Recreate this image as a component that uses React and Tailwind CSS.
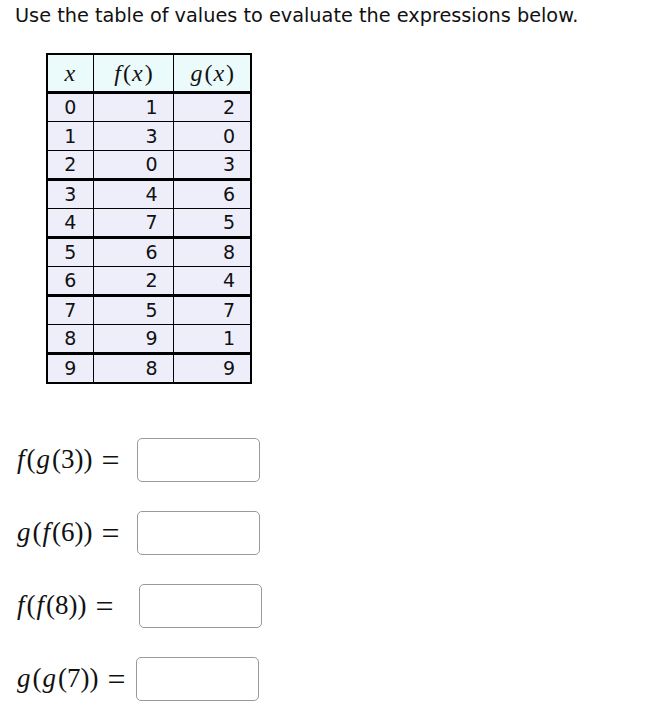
import React from 'react';

const rows = [
  [0, 1, 2],
  [1, 3, 0],
  [2, 0, 3],
  [3, 4, 6],
  [4, 7, 5],
  [5, 6, 8],
  [6, 2, 4],
  [7, 5, 7],
  [8, 9, 1],
  [9, 8, 9],
];

const questions = [
  { outer: 'f', inner: 'g', n: 3, box: 'ml-[15px]' },
  { outer: 'g', inner: 'f', n: 6, box: 'ml-[15px]' },
  { outer: 'f', inner: 'f', n: 8, box: 'ml-[17px]' },
  { outer: 'g', inner: 'g', n: 7, box: 'ml-[14px]' },
];

const serif = "font-['Liberation_Serif','DejaVu_Serif',serif]";

// italic letter with a bit of room so it doesn't crash into the parens
const Var = ({ children }) => <i className="italic pl-[1px] pr-[2px]">{children}</i>;

const App = () => {
  return (
    <div className="w-[646px] h-[724px] bg-white text-[#111] font-['DejaVu_Sans',sans-serif]">
      <p className="pl-[15px] pt-[3px] text-[19.3px] leading-[26px]">
        Use the table of values to evaluate the expressions below.
      </p>

      {/* table of values */}
      <table className="ml-[46px] mt-[24px] border-collapse border-2 border-black text-[19px]">
        <thead>
          <tr className={`bg-[#ebfafa] h-[35px] border-b-[3px] border-black ${serif} text-[24px]`}>
            <th className="w-[46px] border-r border-black font-normal"><Var>x</Var></th>
            <th className="w-[80px] border-r border-black font-normal">
              <Var>f</Var>(<Var>x</Var>)
            </th>
            <th className="w-[78px] font-normal">
              <Var>g</Var>(<Var>x</Var>)
            </th>
          </tr>
        </thead>
        <tbody>
          {rows.map(([x, f, g], i) => (
            <tr
              key={x}
              className={`bg-[#eeeefb] h-[29px] ${i > 0 && i % 2 === 0 ? 'border-b-[3px]' : 'border-b'} border-black`}
            >
              <td className="border-r border-black text-center p-0 leading-none">{x}</td>
              <td className="border-r border-black text-right pr-[15px] p-0 leading-none">{f}</td>
              <td className="text-right pr-[15px] p-0 leading-none">{g}</td>
            </tr>
          ))}
        </tbody>
      </table>

      {/* expressions to evaluate */}
      <div className="mt-[54px] pl-[16px] flex flex-col gap-[29px]">
        {questions.map((q) => (
          <div key={q.n} className="flex items-center h-[44px]">
            <span className={`${serif} text-[27px] whitespace-nowrap w-[106px] flex items-center`}>
              <span>
                <Var>{q.outer}</Var>(<Var>{q.inner}</Var>({q.n}))
              </span>
              <span className="ml-[9px] text-[32px] leading-none">=</span>
            </span>
            <div className={`${q.box} w-[123px] h-[44px] rounded-[5px] border border-[#9a9a9a] bg-white`} />
          </div>
        ))}
      </div>
    </div>
  );
};

export default App;
